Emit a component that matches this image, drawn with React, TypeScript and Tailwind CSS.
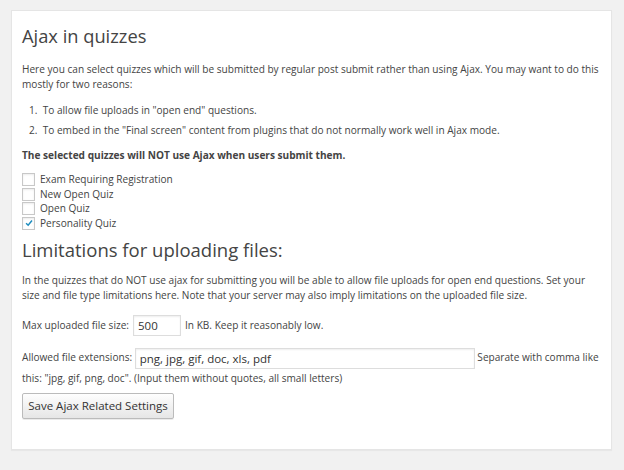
const QUIZZES = [
  { name: "Exam Requiring Registration", checked: false },
  { name: "New Open Quiz", checked: false },
  { name: "Open Quiz", checked: false },
  { name: "Personality Quiz", checked: true },
];

const Check: React.FC<{ checked: boolean }> = ({ checked }) => (
  <span className="grid h-[13px] w-[13px] shrink-0 place-items-center border border-[#c8c8c8] bg-white shadow-[inset_0_1px_2px_rgba(0,0,0,0.08)]">
    {checked && (
      <svg viewBox="0 0 12 12" className="h-[10px] w-[10px]">
        <path d="M2.5 6.2 L5 8.6 L9.6 3" fill="none" stroke="#1e8cbe" strokeWidth="1.8" />
      </svg>
    )}
  </span>
);

export default function App() {
  return (
    <div
      className="min-h-[470px] bg-[#f1f1f1] px-[11px] pt-[10px] text-[10.1px] leading-[15px] text-[#444]"
      style={{ fontFamily: '"Open Sans", "Noto Sans", sans-serif' }}
    >
      <div className="w-[601px] border border-[#e5e5e5] bg-white px-[10px] pb-[30px] pt-[12px] shadow-[0_1px_1px_rgba(0,0,0,0.04)]">
        <h2 className="text-[18.3px] leading-[26px]">Ajax in quizzes</h2>

        <p className="mt-[13px]">
          Here you can select quizzes which will be submitted by regular post submit rather than using Ajax. You may
          want to do this mostly for two reasons:
        </p>
        <ol className="mt-[11px] flex flex-col gap-[5px] pl-[7px]">
          <li>1.&nbsp; To allow file uploads in "open end" questions.</li>
          <li>2.&nbsp; To embed in the "Final screen" content from plugins that do not normally work well in Ajax mode.</li>
        </ol>
        <p className="mt-[10px] font-bold">The selected quizzes will NOT use Ajax when users submit them.</p>

        <div className="mt-[9px] flex flex-col">
          {QUIZZES.map((q) => (
            <label key={q.name} className="flex h-[14.7px] items-center gap-[5px]">
              <Check checked={q.checked} />
              <span>{q.name}</span>
            </label>
          ))}
        </div>

        <h2 className="mt-[6px] text-[18.5px] leading-[26px]">Limitations for uploading files:</h2>

        <p className="mt-[10px]">
          In the quizzes that do NOT use ajax for submitting you will be able to allow file uploads for open end
          questions. Set your size and file type limitations here. Note that your server may also imply limitations on
          the uploaded file size.
        </p>

        <div className="mt-[12px] flex items-center gap-[4px]">
          <span>Max uploaded file size:</span>
          <input
            readOnly
            value="500"
            className="h-[21px] w-[48px] border border-[#ddd] px-[4px] text-[11.5px] text-[#333] shadow-[inset_0_1px_2px_rgba(0,0,0,0.07)] outline-none"
          />
          <span>In KB. Keep it reasonably low.</span>
        </div>

        <div className="mt-[12px] leading-[19px]">
          <span>Allowed file extensions: </span>
          <input
            readOnly
            value="png, jpg, gif, doc, xls, pdf"
            className="h-[21px] w-[340px] border border-[#ddd] px-[4px] align-middle text-[11.5px] text-[#333] shadow-[inset_0_1px_2px_rgba(0,0,0,0.07)] outline-none"
          />
          <span> Separate with comma like this: "jpg, gif, png, doc". (Input them without quotes, all small letters)</span>
        </div>

        <button
          type="button"
          className="mt-[5px] h-[26px] w-[152px] rounded-[2px] border border-[#bbb] bg-gradient-to-b from-[#fefefe] to-[#e6e6e6] text-[11.5px] text-[#333] shadow-[0_1px_0_rgba(0,0,0,0.08)]"
        >
          Save Ajax Related Settings
        </button>
      </div>
    </div>
  );
}
